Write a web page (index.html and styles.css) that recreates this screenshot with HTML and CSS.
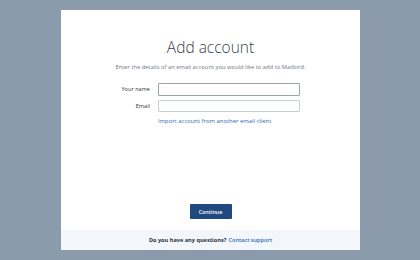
FILE: index.html
```html
<!DOCTYPE html>
<html>
<head>
<meta charset="utf-8">
<link rel="stylesheet" href="styles.css">
</head>
<body>
<div class="card">
  <div class="main">
    <h1 class="title">Add account</h1>
    <p class="subtitle">Enter the details of an email account you would like to add to Mailbird.</p>
    <div class="form">
      <div class="row">
        <label class="label">Your name</label>
        <input class="input focused" type="text" placeholder="˙ ˙ ˙">
      </div>
      <div class="row">
        <label class="label">Email</label>
        <input class="input" type="text">
      </div>
      <div class="row">
        <span class="label"></span>
        <a class="import" href="#">Import account from another email client</a>
      </div>
    </div>
    <div class="spacer"></div>
    <button class="continue">Continue</button>
  </div>
  <div class="footer">
    <span class="question">Do you have any questions?</span> <a class="support" href="#">Contact support</a>
  </div>
</div>
</body>
</html>
```
FILE: styles.css
```css
html, body {
  margin: 0;
  padding: 0;
  height: 100%;
}
body {
  background: #8b9bab;
  font-family: "Open Sans", "Noto Sans", sans-serif;
  overflow: hidden;
}
.card {
  width: 299px;
  height: 240px;
  margin: 10px 0 0 61px;
  background: #ffffff;
  display: flex;
  flex-direction: column;
}
.main {
  flex: 1;
  display: flex;
  flex-direction: column;
  align-items: center;
  padding-top: 27px;
}
.title {
  margin: 0;
  font-size: 15.5px;
  font-weight: 300;
  line-height: 20px;
  color: #383f47;
}
.subtitle {
  margin: 6px 0 0;
  font-size: 5.8px;
  line-height: 8px;
  color: #6d7680;
}
.form {
  margin-top: 12px;
  display: flex;
  flex-direction: column;
  gap: 4px;
  align-self: stretch;
}
.row {
  display: flex;
  align-items: center;
  gap: 8px;
}
.label {
  width: 89px;
  text-align: right;
  font-size: 5.6px;
  color: #30363e;
}
.input {
  box-sizing: border-box;
  width: 142px;
  height: 12.5px;
  margin: 0;
  padding: 0 4px;
  border: 1px solid #c9ced4;
  border-radius: 1px;
  background: #fff;
  font-family: inherit;
  font-size: 5.4px;
  outline: none;
}
.input.focused {
  border-color: #97a3b1;
}
.input::placeholder {
  color: #a9b0b8;
}
.import {
  margin-top: 1px;
  font-size: 5.9px;
  color: #2d6bb0;
  text-decoration: none;
  font-weight: 400;
}
.spacer {
  flex: 1;
}
.continue {
  width: 42px;
  height: 15px;
  margin-bottom: 11px;
  padding: 0;
  border: none;
  border-radius: 1px;
  background: #1f4a7f;
  color: #ffffff;
  font-family: inherit;
  font-size: 5.4px;
  font-weight: 600;
}
.footer {
  height: 20px;
  background: #f3f7fb;
  display: flex;
  align-items: center;
  justify-content: center;
  font-size: 5.6px;
  gap: 2px;
}
.question {
  font-weight: 700;
  color: #2c333b;
}
.support {
  color: #2d6bb0;
  text-decoration: none;
  font-weight: 600;
}
```
